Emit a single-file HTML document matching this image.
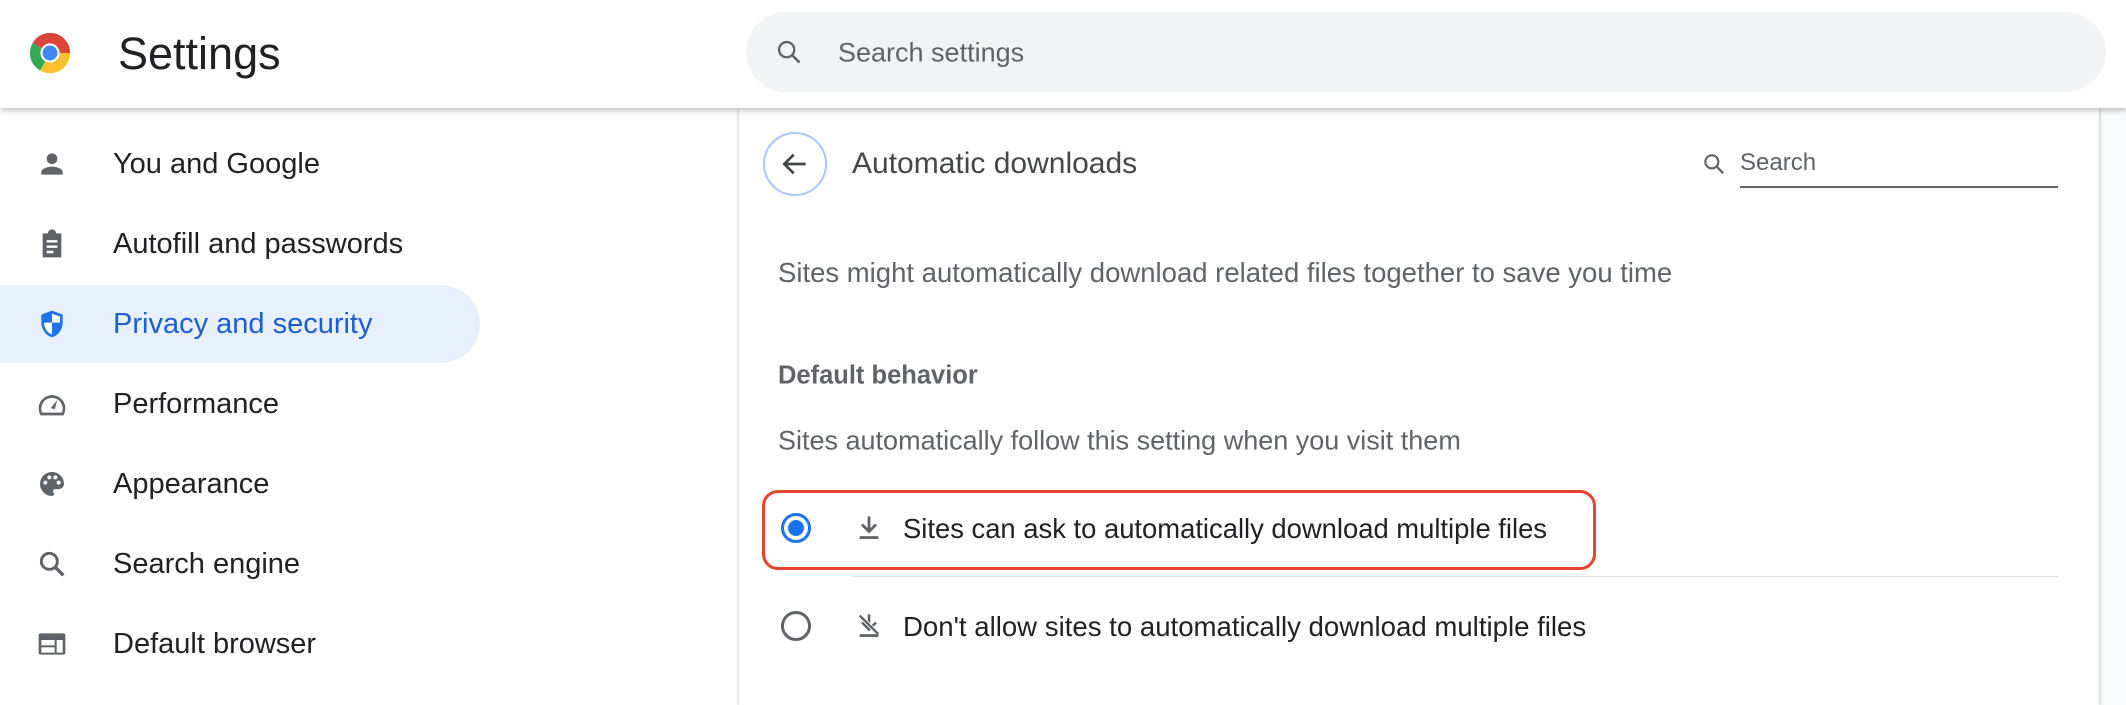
<!DOCTYPE html>
<html><head><style>
*{margin:0;padding:0;box-sizing:border-box}
body{width:2126px;height:705px;overflow:hidden;background:#f8f9fa;font-family:"Liberation Sans",Arial,sans-serif;position:relative}
.hdr{position:absolute;left:0;top:0;width:2126px;height:108px;background:#fff;box-shadow:0 2px 6px rgba(0,0,0,.28);z-index:3}
.side{position:absolute;left:0;top:108px;width:739px;height:597px;background:#fff}
.card{position:absolute;left:739px;top:108px;width:1360px;height:597px;background:#fff;box-shadow:-1px 0 3px rgba(0,0,0,.15),1px 0 3px rgba(0,0,0,.15)}
.abs{position:absolute}
.item{position:absolute;left:0;width:480px;height:78px;display:flex;align-items:center}
.item span{position:absolute;left:113px;font-size:29px;color:#202124;white-space:nowrap}
.item svg{position:absolute;left:36px}
.t{position:absolute;white-space:nowrap;transform:translateY(-50%)}
</style></head><body>
<div class="hdr">
  <svg class="abs" style="left:27px;top:30px" width="46" height="46" viewBox="0 0 48 48">
    <path d="M24 24 L45 24 A21 21 0 0 1 13.5 42.2Z" fill="#fbc02d"/>
    <path d="M24 24 L13.5 42.2 A21 21 0 0 1 5.8 13.5Z" fill="#34a853"/>
    <path d="M24 24 L5.8 13.5 A21 21 0 0 1 45 24Z" fill="#db4437"/>
    <circle cx="24" cy="24" r="10" fill="#fff"/><circle cx="24" cy="24" r="7.8" fill="#4285f4"/>
  </svg>
  <div class="t" style="left:118px;top:54px;font-size:45px;color:#202124">Settings</div>
  <div class="abs" style="left:746px;top:12px;width:1360px;height:80px;border-radius:40px;background:#f1f3f4"></div>
  <svg class="abs" style="left:775px;top:38px" width="28" height="28" viewBox="0 0 24 24"><circle cx="10" cy="10" r="6.5" fill="none" stroke="#5f6368" stroke-width="2"/><path d="M15 15l6 6" stroke="#5f6368" stroke-width="2.2"/></svg>
  <div class="t" style="left:838px;top:53px;font-size:27px;color:#5f6368">Search settings</div>
</div>
<div class="side">
  <div class="abs" style="left:0;top:177px;width:480px;height:78px;border-radius:0 39px 39px 0;background:#e8f0fe"></div>
</div>
<div class="item" style="top:125px"><svg width="32" height="32" viewBox="0 0 24 24"><circle cx="12" cy="8" r="4" fill="#5f6368"/><path d="M4 20v-2c0-2.7 5.3-4 8-4s8 1.3 8 4v2z" fill="#5f6368"/></svg><span>You and Google</span></div>
<div class="item" style="top:205px"><svg width="32" height="32" viewBox="0 0 24 24"><path d="M5 4h4a3 3 0 0 1 6 0h4v18H5z" fill="#5f6368"/><path d="M8 10h8M8 14h8M8 18h5" stroke="#fff" stroke-width="1.8"/></svg><span>Autofill and passwords</span></div>
<div class="item" style="top:285px"><svg width="32" height="32" viewBox="0 0 24 24"><path d="M12 2l8 3v6c0 5-3.4 9.7-8 11-4.6-1.3-8-6-8-11V5z" fill="#1a73e8"/><path d="M12 4.2l6 2.3V11H12zM12 11v8.9C8.6 18.7 6 15 6 11z" fill="#fff"/></svg><span style="color:#1a5fd0">Privacy and security</span></div>
<div class="item" style="top:365px"><svg width="32" height="32" viewBox="0 0 24 24"><path d="M4 19.5a9 9 0 1 1 16 0z" fill="none" stroke="#5f6368" stroke-width="2"/><path d="M11 15l5-6-2 7z" fill="#5f6368"/></svg><span>Performance</span></div>
<div class="item" style="top:445px"><svg width="32" height="32" viewBox="0 0 24 24"><path d="M12 3a9 9 0 0 0 0 18c1 0 1.5-.7 1.5-1.5 0-1-.8-1.3-.8-2.2 0-1 .8-1.5 1.8-1.5H17a4 4 0 0 0 4-4c0-4.8-4-8.8-9-8.8z" fill="#5f6368"/><circle cx="7" cy="11" r="1.5" fill="#fff"/><circle cx="10" cy="7" r="1.5" fill="#fff"/><circle cx="14.5" cy="7" r="1.5" fill="#fff"/><circle cx="17" cy="11" r="1.5" fill="#fff"/></svg><span>Appearance</span></div>
<div class="item" style="top:525px"><svg width="32" height="32" viewBox="0 0 24 24"><circle cx="10" cy="10" r="6" fill="none" stroke="#5f6368" stroke-width="2.2"/><path d="M14.5 14.5l6 6" stroke="#5f6368" stroke-width="2.6"/></svg><span>Search engine</span></div>
<div class="item" style="top:605px"><svg width="32" height="32" viewBox="0 0 24 24"><rect x="2" y="4" width="20" height="16" rx="1.5" fill="#5f6368"/><rect x="4" y="9" width="10" height="4" fill="#fff"/><rect x="4" y="14.5" width="10" height="4" fill="#fff"/><rect x="15.5" y="9" width="4.5" height="9.5" fill="#fff"/></svg><span>Default browser</span></div>
<div class="card">
  <div class="abs" style="left:24px;top:24px;width:64px;height:64px;border-radius:50%;border:2.5px solid #a8c7fa"></div>
  <svg class="abs" style="left:40px;top:40px" width="32" height="32" viewBox="0 0 24 24"><path d="M20 12H5M11 5l-7 7 7 7" fill="none" stroke="#444746" stroke-width="2"/></svg>
  <div class="t" style="left:113px;top:56px;font-size:30px;color:#444746">Automatic downloads</div>
  <svg class="abs" style="left:962px;top:43px" width="26" height="26" viewBox="0 0 24 24"><circle cx="10" cy="10" r="6" fill="none" stroke="#5f6368" stroke-width="2"/><path d="M14.5 14.5l6 6" stroke="#5f6368" stroke-width="2.2"/></svg>
  <div class="t" style="left:1001px;top:55px;font-size:24px;color:#5f6368">Search</div>
  <div class="abs" style="left:1001px;top:78px;width:318px;height:2px;background:#5f6368"></div>
  <div class="t" style="left:39px;top:165px;font-size:27.5px;color:#5f6368">Sites might automatically download related files together to save you time</div>
  <div class="t" style="left:39px;top:268px;font-size:25.5px;color:#5f6368;font-weight:bold">Default behavior</div>
  <div class="t" style="left:39px;top:333px;font-size:27px;color:#5f6368">Sites automatically follow this setting when you visit them</div>
  <div class="abs" style="left:23px;top:382px;width:834px;height:80px;border:3px solid #e8432e;border-radius:16px"></div>
  <div class="abs" style="left:42px;top:405px;width:30px;height:30px;border-radius:50%;border:3px solid #1a73e8"></div>
  <div class="abs" style="left:49px;top:412px;width:16px;height:16px;border-radius:50%;background:#1a73e8"></div>
  <svg class="abs" style="left:116px;top:406px" width="28" height="28" viewBox="0 0 24 24"><path d="M12 2v12M6 9l6 6 6-6" fill="none" stroke="#5f6368" stroke-width="2.4"/><rect x="4" y="19" width="16" height="2.4" fill="#5f6368"/></svg>
  <div class="t" style="left:164px;top:421px;font-size:27.4px;color:#202124">Sites can ask to automatically download multiple files</div>
  <div class="abs" style="left:113px;top:468px;width:1206px;height:1px;background:#e3e3e3"></div>
  <div class="abs" style="left:42px;top:503px;width:30px;height:30px;border-radius:50%;border:3px solid #5f6368"></div>
  <svg class="abs" style="left:116px;top:504px" width="28" height="28" viewBox="0 0 24 24"><path d="M12 2v12M6 9l6 6 6-6" fill="none" stroke="#5f6368" stroke-width="2.2"/><path d="M4 3l16 16" stroke="#fff" stroke-width="3.5"/><path d="M4 3l16 16" stroke="#5f6368" stroke-width="2"/><rect x="4" y="19" width="16" height="2.4" fill="#5f6368"/></svg>
  <div class="t" style="left:164px;top:519px;font-size:27.6px;color:#202124">Don't allow sites to automatically download multiple files</div>
</div>
</body></html>
